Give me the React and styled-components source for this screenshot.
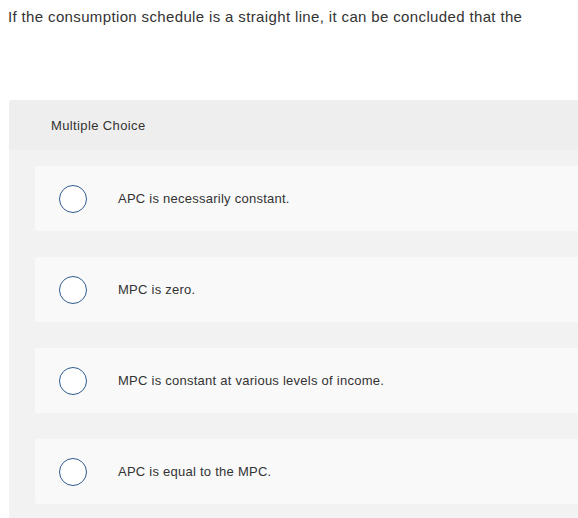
import React from "react";
import styled, { createGlobalStyle } from "styled-components";

const Global = createGlobalStyle`
  html, body { margin: 0; padding: 0; background: #fff; overflow: hidden; }
  body { font-family: "Liberation Sans", Arial, sans-serif; color: #333; }
`;

const Page = styled.div`
  width: 578px;
  height: 518px;
  overflow: hidden;
`;

const Question = styled.p`
  margin: 0;
  padding: 7px 8px 0 8px;
  font-size: 15px;
  letter-spacing: 0.36px;
  line-height: 20px;
  color: #333;
`;

const Panel = styled.section`
  margin: 73px 0 0 9px;
  width: 600px;
  background: #f2f2f2;
  border-radius: 3px 0 0 0;
  padding-bottom: 14px;
`;

const Header = styled.div`
  height: 50px;
  display: flex;
  align-items: center;
  padding-left: 42px;
  background: #eeeeee;
  border-radius: 3px 0 0 0;
  font-size: 13px;
  letter-spacing: 0.38px;
  color: #333;
`;

const Options = styled.div`
  display: flex;
  flex-direction: column;
  gap: 26px;
  padding: 16px 0 0 26px;
`;

const Option = styled.label`
  height: 65px;
  display: flex;
  align-items: center;
  padding-left: 24px;
  background: #f9f9f9;
  border-radius: 3px 0 0 3px;
  font-size: 13px;
  letter-spacing: 0.25px;
  color: #333;
  cursor: pointer;
`;

const Radio = styled.span`
  width: 28px;
  height: 28px;
  box-sizing: border-box;
  border: 1.5px solid #2e5b8f;
  border-radius: 50%;
  background: #fff;
  flex: none;
  margin-right: 31px;
`;

const choices = [
  "APC is necessarily constant.",
  "MPC is zero.",
  "MPC is constant at various levels of income.",
  "APC is equal to the MPC.",
];

export default function App() {
  return (
    <Page>
      <Global />
      <Question>
        If the consumption schedule is a straight line, it can be concluded that the
      </Question>
      <Panel>
        <Header>Multiple Choice</Header>
        <Options>
          {choices.map((c) => (
            <Option key={c}>
              <Radio />
              {c}
            </Option>
          ))}
        </Options>
      </Panel>
    </Page>
  );
}
